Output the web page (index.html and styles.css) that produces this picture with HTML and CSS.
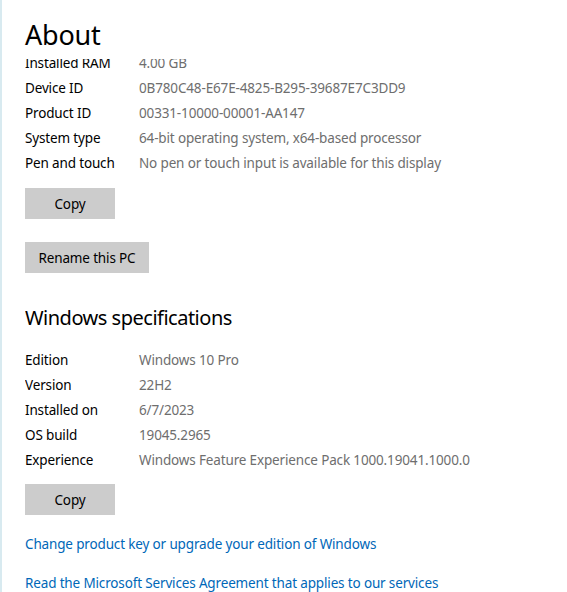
FILE: index.html
```html
<!DOCTYPE html>
<html lang="en">
<head>
<meta charset="utf-8">
<title>About</title>
<link rel="stylesheet" href="styles.css">
</head>
<body>
<div class="window">
  <div class="edge"></div>
  <div class="page">
    <header class="page-header">
      <h1 class="title">About</h1>
    </header>
    <div class="viewport">
      <div class="scroll">
        <dl class="specs">
          <div class="row"><dt>Installed RAM</dt><dd>4.00 GB</dd></div>
          <div class="row"><dt>Device ID</dt><dd>0B780C48-E67E-4825-B295-39687E7C3DD9</dd></div>
          <div class="row"><dt>Product ID</dt><dd>00331-10000-00001-AA147</dd></div>
          <div class="row"><dt>System type</dt><dd>64-bit operating system, x64-based processor</dd></div>
          <div class="row"><dt>Pen and touch</dt><dd>No pen or touch input is available for this display</dd></div>
        </dl>
        <button class="btn btn-copy first-copy">Copy</button>
        <button class="btn btn-rename">Rename this PC</button>

        <h2 class="section-title">Windows specifications</h2>
        <dl class="specs specs-win">
          <div class="row"><dt>Edition</dt><dd>Windows 10 Pro</dd></div>
          <div class="row"><dt>Version</dt><dd>22H2</dd></div>
          <div class="row"><dt>Installed on</dt><dd>6/7/2023</dd></div>
          <div class="row"><dt>OS build</dt><dd>19045.2965</dd></div>
          <div class="row"><dt>Experience</dt><dd>Windows Feature Experience Pack 1000.19041.1000.0</dd></div>
        </dl>
        <button class="btn btn-copy second-copy">Copy</button>

        <a class="link link-first" href="#">Change product key or upgrade your edition of Windows</a>
        <a class="link link-second" href="#">Read the Microsoft Services Agreement that applies to our services</a>
      </div>
    </div>
  </div>
</div>
</body>
</html>
```

FILE: styles.css
```css
* { box-sizing: border-box; }

html, body {
  margin: 0;
  padding: 0;
  background: #ffffff;
  width: 567px;
  height: 592px;
  overflow: hidden;
}

body {
  font-family: "Noto Sans", "Open Sans", "Liberation Sans", sans-serif;
  font-size: 13.5px;
  letter-spacing: -0.15px;
  color: #000000;
}

.window {
  display: flex;
  height: 592px;
}

.edge {
  width: 2px;
  flex: 0 0 2px;
  background: #d8eaf0;
}

.page {
  flex: 1;
  display: flex;
  flex-direction: column;
  padding-left: 23px;
  min-width: 0;
}

.page-header {
  height: 59px;
  flex: 0 0 59px;
  background: #ffffff;
  position: relative;
  z-index: 1;
}

.title {
  margin: 0;
  padding-top: 16px;
  font-size: 27px;
  font-weight: 400;
  letter-spacing: -0.2px;
  line-height: 38px;
  color: #000000;
}

.viewport {
  flex: 1;
  overflow: hidden;
}

.scroll {
  display: flex;
  flex-direction: column;
  align-items: flex-start;
  margin-top: -9px;
}

.specs {
  margin: 0;
  display: flex;
  flex-direction: column;
}

.row {
  display: flex;
  height: 25px;
  align-items: center;
  white-space: nowrap;
}

.row dt {
  width: 114px;
  flex: 0 0 114px;
  color: #000000;
}

.row dd {
  margin: 0;
  color: #6e6e6e;
}

.btn {
  font-family: inherit;
  font-size: 13.5px;
  letter-spacing: -0.15px;
  color: #000000;
  background: #cccccc;
  border: none;
  border-radius: 0;
  height: 31px;
  padding: 0;
  white-space: nowrap;
}

.btn-copy {
  width: 90px;
}

.first-copy {
  margin-top: 13px;
}

.btn-rename {
  margin-top: 23px;
  width: 124px;
}

.section-title {
  margin: 31px 0 0 0;
  font-size: 20px;
  font-weight: 400;
  letter-spacing: -0.5px;
  line-height: 28px;
  color: #000000;
}

.specs-win {
  margin-top: 15px;
}

.second-copy {
  margin-top: 12px;
}

.link {
  color: #0067b8;
  text-decoration: none;
  line-height: 20px;
  white-space: nowrap;
}

.link-first {
  margin-top: 19px;
}

.link-second {
  margin-top: 19px;
}
```
